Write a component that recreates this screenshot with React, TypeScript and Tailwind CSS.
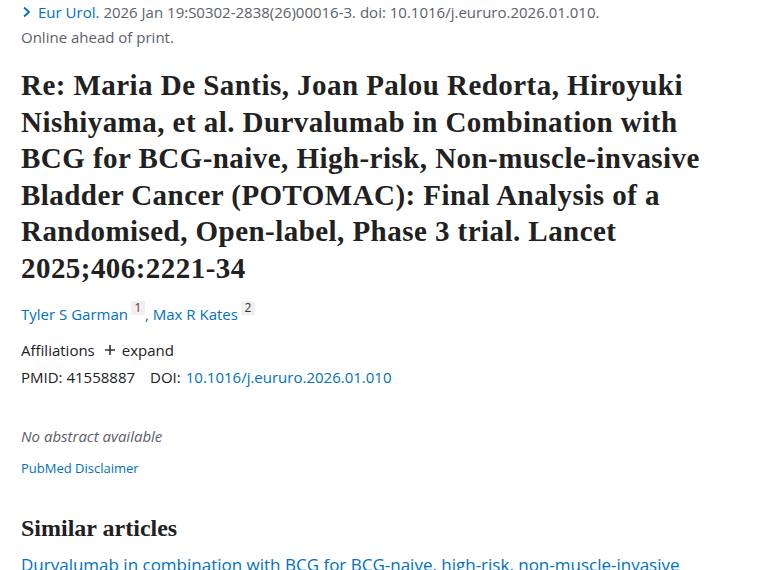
const TITLE_LINES = [
  'Re: Maria De Santis, Joan Palou Redorta, Hiroyuki',
  'Nishiyama, et al. Durvalumab in Combination with',
  'BCG for BCG-naive, High-risk, Non-muscle-invasive',
  'Bladder Cancer (POTOMAC): Final Analysis of a',
  'Randomised, Open-label, Phase 3 trial. Lancet',
  '2025;406:2221-34',
]

function Chevron() {
  return (
    <svg width="9" height="12" viewBox="0 0 9 12" className="mr-[7px]">
      <path d="M2 1.5 L7 6 L2 10.5" fill="none" stroke="#0071bc" strokeWidth="1.8" />
    </svg>
  )
}

function Sup({ n, red }: { n: string; red?: boolean }) {
  return (
    <span
      className={`ml-[3px] inline-flex h-[14px] w-[14px] -translate-y-[6px] items-center justify-center rounded-[2px] bg-[#f0f0f0] text-[12px] leading-none ${
        red ? 'text-[#7a2e2e]' : 'text-[#333]'
      }`}
    >
      {n}
    </span>
  )
}

export default function App() {
  return (
    <div className="h-[570px] w-[760px] overflow-hidden bg-white pl-[21px] font-['Open_Sans','Noto_Sans',sans-serif] text-[15px] text-[#212121]">
      <div className="flex h-[24px] items-center pl-[1px] text-[#5b616b]">
        <Chevron />
        <span className="text-[#0071bc]">Eur Urol.</span>
        <span className="ml-[4px]">2026 Jan 19:S0302-2838(26)00016-3. doi: 10.1016/j.eururo.2026.01.010.</span>
      </div>
      <div className="flex h-[26px] items-center text-[#5b616b]">Online ahead of print.</div>

      <h1 className="mt-[17px] font-['Liberation_Serif',serif] text-[29px] font-bold leading-[36.5px] tracking-[0.45px] text-[#212121]">
        {TITLE_LINES.map((line) => (
          <span key={line} className="block whitespace-nowrap">
            {line}
          </span>
        ))}
      </h1>

      <div className="mt-[16px] flex h-[24px] items-center text-[#0071bc]">
        <span>Tyler S Garman</span>
        <Sup n="1" red />
        <span>, Max R Kates</span>
        <Sup n="2" />
      </div>

      <div className="mt-[12px] flex h-[24px] items-center">
        <span>Affiliations</span>
        <svg width="12" height="12" viewBox="0 0 12 12" className="ml-[9px] mr-[6px]">
          <path d="M6 1 V11 M1 6 H11" stroke="#333" strokeWidth="1.6" />
        </svg>
        <span>expand</span>
      </div>

      <div className="mt-[3px] flex h-[24px] items-center">
        <span>PMID: 41558887</span>
        <span className="ml-[15px]">DOI:</span>
        <span className="ml-[5px] text-[#0071bc]">10.1016/j.eururo.2026.01.010</span>
      </div>

      <div className="mt-[35px] flex h-[24px] items-center italic text-[#5b616b]">No abstract available</div>

      <div className="mt-[9px] flex h-[24px] items-center text-[13px] text-[#0071bc]">PubMed Disclaimer</div>

      <h2 className="mt-[31px] flex h-[32px] items-center font-['Liberation_Serif',serif] text-[24px] font-bold text-[#212121]">
        Similar articles
      </h2>

      <div className="mt-[9px] flex h-[24px] items-center whitespace-nowrap text-[17px] text-[#0071bc]">
        Durvalumab in combination with BCG for BCG-naive, high-risk, non-muscle-invasive
      </div>
    </div>
  )
}
